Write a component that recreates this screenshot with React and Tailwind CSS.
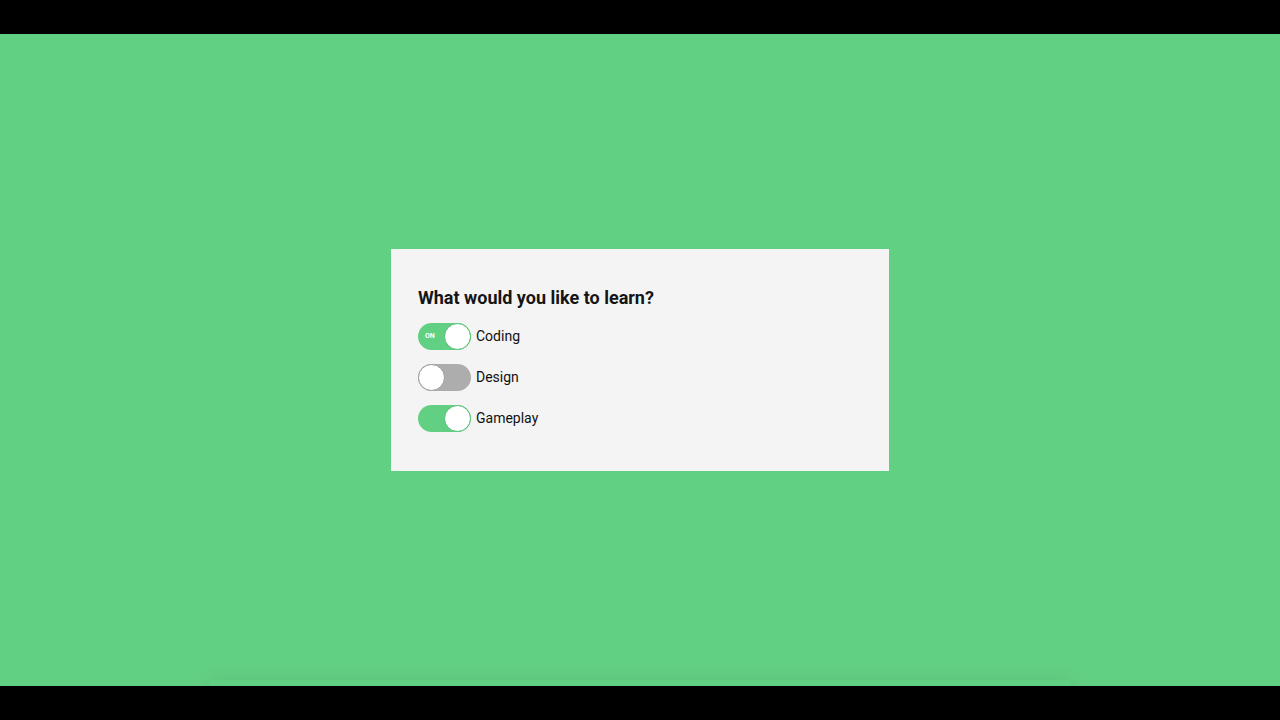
import { useState } from 'react';

const Toggle = ({ label, on, showText, onChange }) => (
  <div className="flex items-center gap-[5px]">
    <button
      type="button"
      onClick={onChange}
      className={`relative flex h-[27px] w-[53px] items-center rounded-full ${on ? 'bg-[#62d083]' : 'bg-[#adadad]'}`}
    >
      {on && showText && (
        <span className="absolute left-[7px] text-[7px] font-bold text-white">ON</span>
      )}
      <span
        className={`absolute top-0 h-[27px] w-[27px] rounded-full border bg-white ${on ? 'right-0 border-[#4fbf72]' : 'left-0 border-[#9a9a9a]'}`}
      />
    </button>
    <span className="text-[14px] text-[#111]">{label}</span>
  </div>
);

export default function App() {
  const [items, setItems] = useState([
    { label: 'Coding', on: true, showText: true },
    { label: 'Design', on: false },
    { label: 'Gameplay', on: true },
  ]);

  const flip = (i) =>
    setItems(items.map((it, j) => (j === i ? { ...it, on: !it.on } : it)));

  return (
    <div className="flex h-[720px] flex-col bg-black font-['Roboto',sans-serif]">
      <div className="h-[34px] shrink-0" />
      <div className="flex h-[652px] flex-col bg-[#62d083]">
        <div className="mt-[6px] flex flex-1 items-center justify-center">
          <div className="flex h-[222px] w-[498px] flex-col bg-[#f4f4f4] px-[27px] pt-[39px]">
            <h2 className="text-[18px] font-bold leading-5 text-[#151515]">What would you like to learn?</h2>
            <div className="mt-[15px] flex flex-col gap-[14px]">
              {items.map((it, i) => (
                <Toggle key={it.label} {...it} onChange={() => flip(i)} />
              ))}
            </div>
          </div>
        </div>
        <div className="mx-[210px] h-[6px] shadow-[0_6px_20px_rgba(0,0,0,0.22)]" />
      </div>
      <div className="relative h-[34px] shrink-0 bg-black" />
    </div>
  );
}
